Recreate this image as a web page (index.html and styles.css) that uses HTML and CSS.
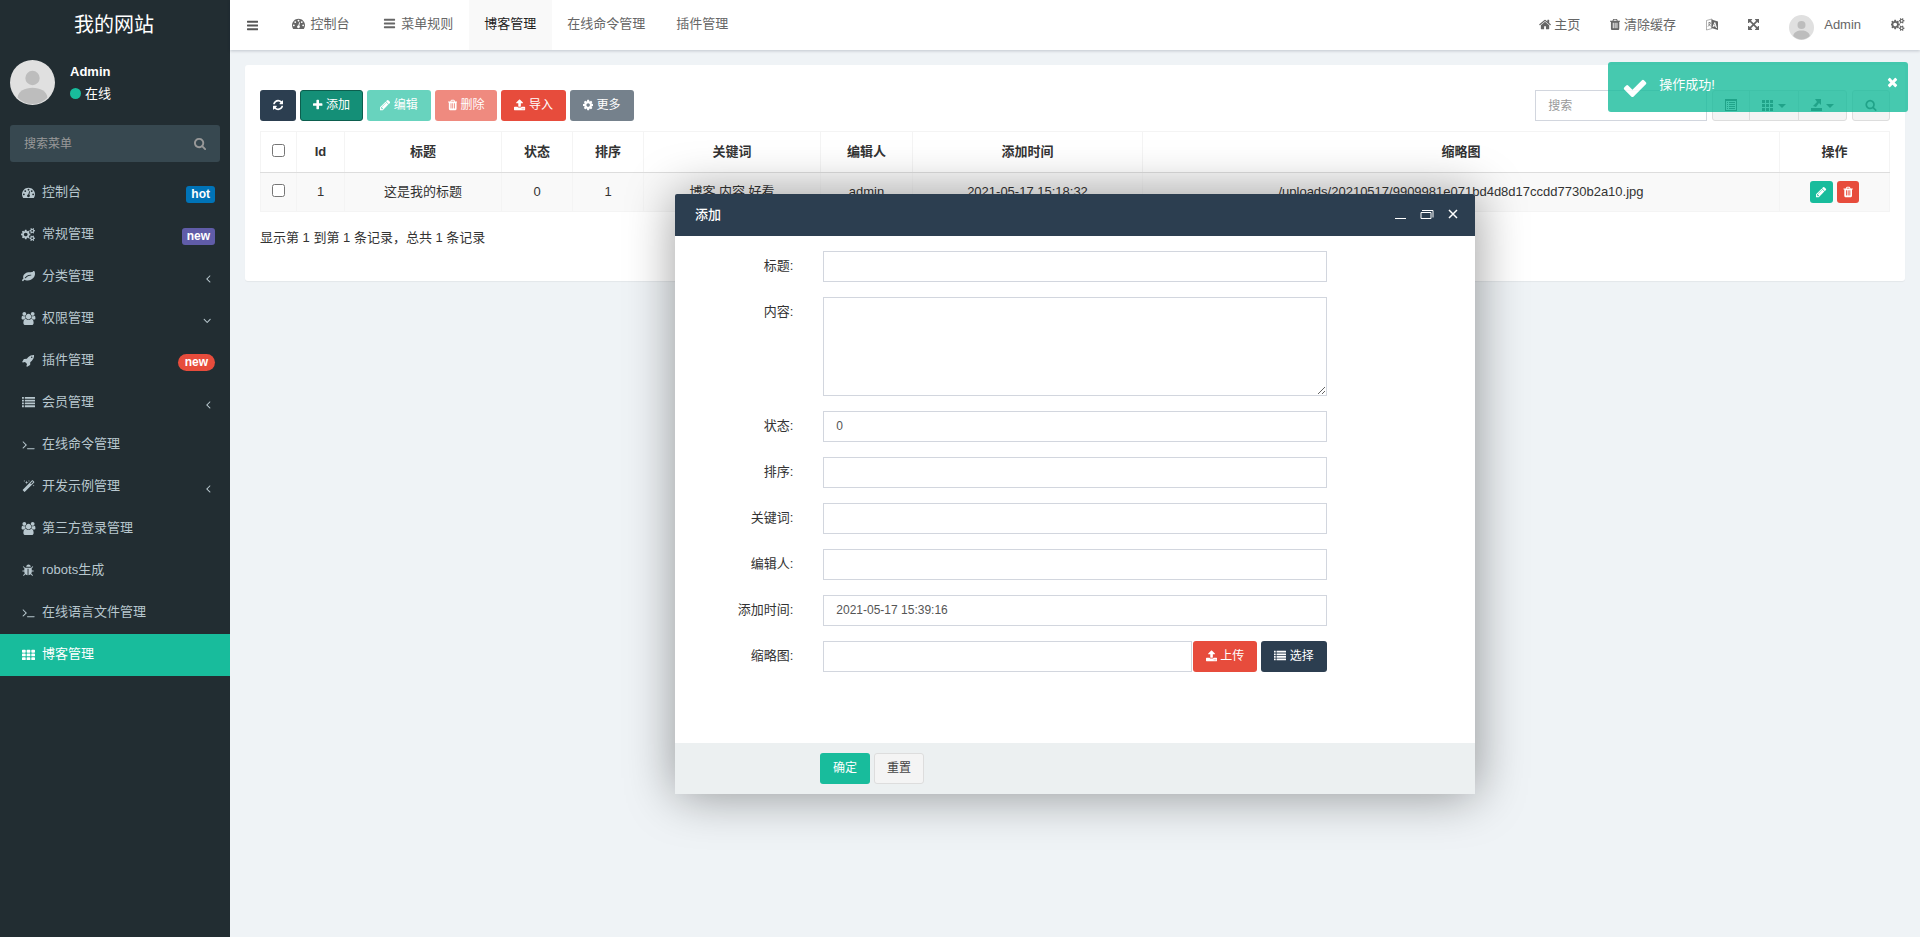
FILE: index.html
```html
<!DOCTYPE html>
<html lang="zh-CN">
<head>
    <meta charset="UTF-8">
    <meta name="viewport" content="width=device-width, initial-scale=1.0">
    <title>我的网站</title>
    <link rel="stylesheet" href="styles.css">
</head>
<body>

    <!-- Icon shapes -->
    <svg class="sprite" aria-hidden="true">
        <defs>
            <path id="bars" d="M1664 1344v128q0 26-19 45t-45 19h-1408q-26 0-45-19t-19-45v-128q0-26 19-45t45-19h1408q26 0 45 19t19 45zm0-512v128q0 26-19 45t-45 19h-1408q-26 0-45-19t-19-45v-128q0-26 19-45t45-19h1408q26 0 45 19t19 45zm0-512v128q0 26-19 45t-45 19h-1408q-26 0-45-19t-19-45v-128q0-26 19-45t45-19h1408q26 0 45 19t19 45z"/>
            <path id="search" d="M1216 832q0-185-131.500-316.500t-316.500-131.500-316.500 131.500-131.500 316.500 131.500 316.500 316.500 131.500 316.500-131.500 131.500-316.500zm512 832q0 52-38 90t-90 38q-54 0-90-38l-343-342q-179 124-399 124-143 0-273.500-55.500t-225-150-150-225-55.500-273.500 55.500-273.500 150-225 225-150 273.500-55.500 273.500 55.500 225 150 150 225 55.500 273.500q0 220-124 399l343 343q37 37 37 90z"/>
            <path id="plus" d="M1600 736v192q0 40-28 68t-68 28h-416v416q0 40-28 68t-68 28h-192q-40 0-68-28t-28-68v-416h-416q-40 0-68-28t-28-68v-192q0-40 28-68t68-28h416v-416q0-40 28-68t68-28h192q40 0 68 28t28 68v416h416q40 0 68 28t28 68z"/>
            <path id="pencil" d="M491 1536l91-91-235-235-91 91v107h128v128h107zm523-928q0-22-22-22-10 0-17 7l-542 542q-7 7-7 17 0 22 22 22 10 0 17-7l542-542q7-7 7-17zm-54-192l416 416-832 832h-416v-416zm683 96q0 53-37 90l-166 166-416-416 166-165q36-38 90-38 53 0 91 38l235 234q37 39 37 91z"/>
            <path id="trash" d="M704 1376v-704q0-14-9-23t-23-9h-64q-14 0-23 9t-9 23v704q0 14 9 23t23 9h64q14 0 23-9t9-23zm256 0v-704q0-14-9-23t-23-9h-64q-14 0-23 9t-9 23v704q0 14 9 23t23 9h64q14 0 23-9t9-23zm256 0v-704q0-14-9-23t-23-9h-64q-14 0-23 9t-9 23v704q0 14 9 23t23 9h64q14 0 23-9t9-23zm-544-992h448l-48-117q-7-9-17-11h-317q-10 2-17 11zm928 32v64q0 14-9 23t-23 9h-96v948q0 83-47 143.500t-113 60.500h-832q-66 0-113-58.500t-47-141.500v-952h-96q-14 0-23-9t-9-23v-64q0-14 9-23t23-9h309l70-167q15-37 54-63t79-26h320q40 0 79 26t54 63l70 167h309q14 0 23 9t9 23z"/>
            <path id="upload" d="M1344 1472q0-26-19-45t-45-19-45 19-19 45 19 45 45 19 45-19 19-45zm256 0q0-26-19-45t-45-19-45 19-19 45 19 45 45 19 45-19 19-45zm128-224v320q0 40-28 68t-68 28h-1472q-40 0-68-28t-28-68v-320q0-40 28-68t68-28h427q21 56 70.500 92t110.500 36h256q61 0 110.500-36t70.500-92h427q40 0 68 28t28 68zm-325-648q-17 40-59 40h-256v448q0 26-19 45t-45 19h-256q-26 0-45-19t-19-45v-448h-256q-42 0-59-40-17-39 14-69l448-448q18-19 45-19t45 19l448 448q31 30 14 69z"/>
            <path id="cog" d="M1152 896q0-106-75-181t-181-75-181 75-75 181 75 181 181 75 181-75 75-181zm512-109v222q0 12-8 23t-20 13l-185 28q-19 54-39 91 35 50 107 138 10 12 10 25t-9 23q-27 37-99 108t-94 71q-12 0-26-9l-138-108q-44 23-91 38-16 136-29 186-7 28-36 28h-222q-14 0-24.500-8.500t-11.500-21.500l-28-184q-49-16-90-37l-141 107q-10 9-25 9-14 0-25-11-126-114-165-168-7-10-7-23 0-12 8-23 15-21 51-66.500t54-70.500q-27-50-41-99l-183-27q-13-2-21-12.500t-8-23.500v-222q0-12 8-23t19-13l186-28q14-46 39-92-40-57-107-138-10-12-10-24 0-10 9-23 26-36 98.500-107.500t94.500-71.500q13 0 26 10l138 107q44-23 91-38 16-136 29-186 7-28 36-28h222q14 0 24.500 8.500t11.500 21.500l28 184q49 16 90 37l142-107q9-9 24-9 13 0 25 10 129 119 165 170 7 8 7 22 0 12-8 23-15 21-51 66.500t-54 70.500q26 50 41 98l183 28q13 2 21 12.500t8 23.500z"/>
            <path id="refresh" d="M1639 1056q0 5-1 7-64 268-268 434.500t-478 166.500q-146 0-282.500-55t-243.500-157l-129 129q-19 19-45 19t-45-19-19-45v-448q0-26 19-45t45-19h448q26 0 45 19t19 45-19 45l-137 137q71 66 161 102t187 36q134 0 250-65t186-179q11-17 53-117 8-23 30-23h192q13 0 22.500 9.500t9.500 22.500zm25-800v448q0 26-19 45t-45 19h-448q-26 0-45-19t-19-45 19-45l138-138q-148-137-349-137-134 0-250 65t-186 179q-11 17-53 117-8 23-30 23h-199q-13 0-22.500-9.500t-9.500-22.500v-7q65-268 270-434.500t480-166.500q146 0 284 55.500t245 156.500l130-129q19-19 45-19t45 19 19 45z"/>
            <path id="home" d="M1472 992v480q0 26-19 45t-45 19h-384v-384h-256v384h-384q-26 0-45-19t-19-45v-480q0-1 .5-3t.5-3l575-474 575 474q1 2 1 6zm223-69l-62 74q-8 9-21 11h-3q-13 0-21-7l-692-577-692 577q-12 8-24 7-13-2-21-11l-62-74q-8-10-7-23.500t11-21.500l719-599q32-26 76-26t76 26l244 204v-195q0-14 9-23t23-9h192q14 0 23 9t9 23v408l219 182q10 8 11 21.500t-7 23.500z"/>
            <path id="check" d="M1671 566q0 40-28 68l-724 724-136 136q-28 28-68 28t-68-28l-136-136-362-362q-28-28-28-68t28-68l136-136q28-28 68-28t68 28l294 295 656-657q28-28 68-28t68 28l136 136q28 28 28 68z"/>
            <path id="times" d="M1490 1322q0 40-28 68l-136 136q-28 28-68 28t-68-28l-294-294-294 294q-28 28-68 28t-68-28l-136-136q-28-28-28-68t28-68l294-294-294-294q-28-28-28-68t28-68l136-136q28-28 68-28t68 28l294 294 294-294q28-28 68-28t68 28l136 136q28 28 28 68t-28 68l-294 294 294 294q28 28 28 68z"/>
            <path id="angle-left" d="M1203 544q0 13-10 23l-393 393 393 393q10 10 10 23t-10 23l-50 50q-10 10-23 10t-23-10l-466-466q-10-10-10-23t10-23l466-466q10-10 23-10t23 10l50 50q10 10 10 23z"/>
            <path id="angle-down" d="M1395 736q0 13-10 23l-466 466q-10 10-23 10t-23-10l-466-466q-10-10-10-23t10-23l50-50q10-10 23-10t23 10l393 393 393-393q10-10 23-10t23 10l50 50q10 10 10 23z"/>
            <path id="terminal" d="M649 983l-466 466q-10 10-23 10t-23-10l-50-50q-10-10-10-23t10-23l393-393-393-393q-10-10-10-23t10-23l50-50q10-10 23-10t23 10l466 466q10 10 10 23t-10 23zm1079 457v64q0 14-9 23t-23 9h-960q-14 0-23-9t-9-23v-64q0-14 9-23t23-9h960q14 0 23 9t9 23z"/>
            <path id="users" d="M593 896q-162 5-265 128h-134q-82 0-138-40.500t-56-118.500q0-353 124-353 6 0 43.500 21t97.500 42.500 119 21.500q67 0 133-23-5 37-5 66 0 139 81 256zm1071 637q0 120-73 189.500t-194 69.500h-874q-121 0-194-69.500t-73-189.500q0-53 3.500-103.500t14-109 26.500-108.500 43-97.500 62-81 85.500-53.500 111.500-20q10 0 43 21.500t73 48 107 48 135 21.500 135-21.500 107-48 73-48 43-21.500q61 0 111.500 20t85.500 53.500 62 81 43 97.500 26.500 108.500 14 109 3.500 103.500zm-1024-1277q0 106-75 181t-181 75-181-75-75-181 75-181 181-75 181 75 75 181zm704 384q0 159-112.500 271.500t-271.500 112.500-271.500-112.500-112.500-271.500 112.500-271.500 271.500-112.500 271.500 112.500 112.500 271.500zm576 225q0 78-56 118.500t-138 40.500h-134q-103-123-265-128 81-117 81-256 0-29-5-66 66 23 133 23 59 0 119-21.500t97.500-42.500 43.500-21q124 0 124 353zm-128-609q0 106-75 181t-181 75-181-75-75-181 75-181 181-75 181 75 75 181z"/>
            <path id="dashboard" d="M384 1152q0-53-37.500-90.500t-90.500-37.500-90.500 37.500-37.500 90.500 37.500 90.500 90.500 37.500 90.500-37.500 37.500-90.500zm192-448q0-53-37.500-90.500t-90.500-37.500-90.500 37.500-37.500 90.500 37.500 90.500 90.500 37.500 90.500-37.500 37.500-90.500zm428 481l101-382q6-26-7.500-48.500t-38.500-29.500-48 6.500-30 39.500l-101 382q-60 5-107 43.500t-63 98.500q-20 77 20 146t117 89 146-20 89-117q16-60-6-117t-72-91zm660-33q0-53-37.500-90.500t-90.500-37.500-90.500 37.500-37.500 90.500 37.500 90.500 90.500 37.500 90.500-37.500 37.500-90.500zm-640-640q0-53-37.500-90.500t-90.500-37.500-90.500 37.500-37.500 90.500 37.500 90.500 90.500 37.500 90.500-37.500 37.500-90.500zm448 192q0-53-37.500-90.500t-90.500-37.500-90.500 37.500-37.500 90.500 37.500 90.500 90.500 37.500 90.500-37.500 37.500-90.500zm320 448q0 261-141 483-19 29-54 29h-1402q-35 0-54-29-141-221-141-483 0-182 71-348t191-286 286-191 348-71 348 71 286 191 191 286 71 348z"/>
            <path id="expand" d="M1411 541l-355 355 355 355 144-144q29-31 70-14 39 17 39 59v448q0 26-19 45t-45 19h-448q-42 0-59-40-17-39 14-69l144-144-355-355-355 355 144 144q31 30 14 69-17 40-59 40h-448q-26 0-45-19t-19-45v-448q0-42 40-59 39-17 69 14l144 144 355-355-355-355-144 144q-19 19-45 19-12 0-24-5-40-17-40-59v-448q0-26 19-45t45-19h448q42 0 59 40 17 39-14 69l-144 144 355 355 355-355-144-144q-31-30-14-69 17-40 59-40h448q26 0 45 19t19 45v448q0 42-39 59-13 5-25 5-26 0-45-19z"/>
            <path id="leaf" d="M1280 704q0-26-19-45t-45-19q-172 0-318 49.500t-259.500 134-235.500 219.500q-19 21-19 45 0 26 19 45t45 19q24 0 45-19 27-24 74-71t67-66q137-124 268.500-176t313.500-52q26 0 45-19t19-45zm512-198q0 95-20 193-46 224-184.500 383t-357.500 268q-214 108-438 108-148 0-286-47-15-5-88-42t-96-37q-16 0-39.500 32t-45 70-52.500 70-60 32q-43 0-63.500-17.500t-45.500-59.500q-2-4-6-11t-5.500-10-3-9.500-1.500-13.500q0-35 31-73.500t68-65.500 68-56 31-48q0-4-14-38t-16-44q-9-51-9-104 0-115 43.500-220t119-184.500 170.500-139 204-95.500q55-18 145-25.500t179.500-9 178.500-6 163.500-24 113.500-56.500l29.500-29.500 29.500-28 27-20 36.500-16 43.500-4.500q39 0 70.500 46t47.500 112 24 124 8 96z"/>
            <path id="rocket" d="M1440 448q0-40-28-68t-68-28-68 28-28 68 28 68 68 28 68-28 28-68zm224-288q0 249-75.500 430.500t-253.500 360.500q-81 80-195 176l-20 379q-2 16-16 26l-384 224q-7 4-16 4-12 0-23-9l-64-64q-13-14-8-32l85-276-281-281-276 85q-3 1-9 1-14 0-23-9l-64-64q-17-19-5-39l224-384q10-14 26-16l379-20q96-114 176-195 188-187 358-258t431-71q14 0 24 9.500t10 22.500z"/>
            <path id="magic" d="M1254 581l293-293-107-107-293 293zm447-293q0 27-18 45l-1286 1286q-18 18-45 18t-45-18l-198-198q-18-18-18-45t18-45l1286-1286q18-18 45-18t45 18l198 198q18 18 18 45zm-1351-190l98 30-98 30-30 98-30-98-98-30 98-30 30-98zm350 162l196 60-196 60-60 196-60-196-196-60 196-60 60-196zm930 478l98 30-98 30-30 98-30-98-98-30 98-30 30-98zm-640-640l98 30-98 30-30 98-30-98-98-30 98-30 30-98z"/>
            <path id="bug" d="M1632 960q0 26-19 45t-45 19h-224q0 171-67 290l208 209q19 19 19 45t-19 45q-18 19-45 19t-45-19l-198-197q-5 5-15 13t-42 28.500-65 36.500-82 29-97 13v-896h-128v896q-51 0-101.500-13.500t-87-33-66-39-43.500-32.500l-15-14-183 207q-20 21-48 21-24 0-43-16-19-18-20.500-44.500t15.500-46.500l202-227q-58-114-58-274h-224q-26 0-45-19t-19-45 19-45 45-19h224v-294l-173-173q-19-19-19-45t19-45 45-19 45 19l173 173h844l173-173q19-19 45-19t45 19 19 45-19 45l-173 173v294h224q26 0 45 19t19 45zm-416-576h-640q0-133 93.500-226.500t226.500-93.500 226.500 93.500 93.500 226.500z"/>
            <g id="cogs">
                <path d="M832 896q0-106-75-181t-181-75-181 75-75 181 75 181 181 75 181-75 75-181zm384-91v185q0 10-7 19.500t-16 10.500l-155 24q-11 35-32 76 34 48 90 115 7 11 7 20 0 12-7 19-23 30-82.500 89.500t-78.500 59.500q-11 0-21-7l-115-90q-37 19-77 31-11 108-23 155-7 24-30 24h-186q-11 0-20-7.500t-10-17.500l-23-153q-34-10-75-31l-118 89q-7 7-20 7-11 0-21-8-144-133-144-160 0-9 7-19 10-14 41-53t47-61q-23-44-35-82l-152-24q-10-1-17-9.500t-7-19.500v-185q0-10 7-19.500t16-10.500l155-24q11-35 32-76-34-48-90-115-7-11-7-20 0-12 7-20 22-30 82-89t79-59q11 0 21 7l115 90q34-18 77-32 11-108 23-154 7-24 30-24h186q11 0 20 7.500t10 17.500l23 153q34 10 75 31l118-89q8-7 20-7 11 0 21 8 144 133 144 160 0 8-7 19-12 16-42 54t-45 60q23 48 34 82l152 23q10 2 17 10.500t7 19.500z"/>
                <path id="cog-small" d="M1600 1408q0-52-38-90t-90-38-90 38-38 90q0 53 37.500 90.500t90.500 37.500 90.500-37.500 37.500-90.500zm256-70v140q0 16-149 31-12 27-30 52 51 113 51 138 0 4-4 7-122 71-124 71-8 0-46-47t-52-68q-20 2-30 2t-30-2q-14 21-52 68t-46 47q-2 0-124-71-4-3-4-7 0-25 51-138-18-25-30-52-149-15-149-31v-140q0-16 149-31 13-29 30-52-51-113-51-138 0-4 4-7 4-2 35-20t59-34 30-16q8 0 46 46.500t52 67.500q20-2 30-2t30 2q51-71 92-112l6-2q4 0 124 70 4 3 4 7 0 25-51 138 17 23 30 52 149 15 149 31z"/>
                <use href="#cog-small" y="-1024"/>
            </g>
            <path id="list" d="M32 128h192q32 0 32 32v192q0 32-32 32h-192q-32 0-32-32v-192q0-32 32-32zm0 384h192q32 0 32 32v192q0 32-32 32h-192q-32 0-32-32v-192q0-32 32-32zm0 384h192q32 0 32 32v192q0 32-32 32h-192q-32 0-32-32v-192q0-32 32-32zm0 384h192q32 0 32 32v192q0 32-32 32h-192q-32 0-32-32v-192q0-32 32-32zm384-1152h1344q32 0 32 32v192q0 32-32 32h-1344q-32 0-32-32v-192q0-32 32-32zm0 384h1344q32 0 32 32v192q0 32-32 32h-1344q-32 0-32-32v-192q0-32 32-32zm0 384h1344q32 0 32 32v192q0 32-32 32h-1344q-32 0-32-32v-192q0-32 32-32zm0 384h1344q32 0 32 32v192q0 32-32 32h-1344q-32 0-32-32v-192q0-32 32-32z"/>
            <path id="th" d="M96 256h320q96 0 96 96v192q0 96-96 96h-320q-96 0-96-96v-192q0-96 96-96zm640 0h320q96 0 96 96v192q0 96-96 96h-320q-96 0-96-96v-192q0-96 96-96zm640 0h320q96 0 96 96v192q0 96-96 96h-320q-96 0-96-96v-192q0-96 96-96zM96 768h320q96 0 96 96v192q0 96-96 96h-320q-96 0-96-96v-192q0-96 96-96zm640 0h320q96 0 96 96v192q0 96-96 96h-320q-96 0-96-96v-192q0-96 96-96zm640 0h320q96 0 96 96v192q0 96-96 96h-320q-96 0-96-96v-192q0-96 96-96zM96 1280h320q96 0 96 96v192q0 96-96 96h-320q-96 0-96-96v-192q0-96 96-96zm640 0h320q96 0 96 96v192q0 96-96 96h-320q-96 0-96-96v-192q0-96 96-96zm640 0h320q96 0 96 96v192q0 96-96 96h-320q-96 0-96-96v-192q0-96 96-96z"/>
            <g id="avatar">
                <circle cx="50" cy="50" r="50" fill="#e0e0e0"/>
                <circle cx="50" cy="40" r="16" fill="#bdbdbd"/>
                <path d="M17 84c0-30 66-30 66 0a46 46 0 0 1-66 0z" fill="#bdbdbd"/>
            </g>
        </defs>
    </svg>

    <!-- Sidebar -->
    <aside class="sidebar">
        <a href="#" class="logo">我的网站</a>

        <div class="user-panel">
            <svg class="avatar" viewBox="0 0 100 100"><use href="#avatar"/></svg>
            <div class="user-info">
                <strong>Admin</strong>
                <a href="#" class="status"><span class="dot"></span>在线</a>
            </div>
        </div>

        <form class="menu-search">
            <input type="text" placeholder="搜索菜单" aria-label="搜索菜单">
            <button type="button" aria-label="搜索"><svg class="icon" viewBox="64 0 1664 1792"><use href="#search"/></svg></button>
        </form>

        <nav class="menu">
            <a href="#"><svg class="icon fw" viewBox="0 0 1792 1792"><use href="#dashboard"/></svg>控制台<span class="label blue">hot</span></a>
            <a href="#"><svg class="icon fw" viewBox="0 0 1920 1792"><use href="#cogs"/></svg>常规管理<span class="label purple">new</span></a>
            <a href="#"><svg class="icon fw" viewBox="0 0 1792 1792"><use href="#leaf"/></svg>分类管理<svg class="icon arrow" viewBox="448 0 896 1792"><use href="#angle-left"/></svg></a>
            <a href="#"><svg class="icon fw" viewBox="0 0 1920 1792"><use href="#users"/></svg>权限管理<svg class="icon arrow" viewBox="320 0 1152 1792"><use href="#angle-down"/></svg></a>
            <a href="#"><svg class="icon fw" viewBox="0 0 1792 1792"><use href="#rocket"/></svg>插件管理<span class="label red">new</span></a>
            <a href="#"><svg class="icon fw" viewBox="0 0 1792 1792"><use href="#list"/></svg>会员管理<svg class="icon arrow" viewBox="448 0 896 1792"><use href="#angle-left"/></svg></a>
            <a href="#"><svg class="icon fw" viewBox="0 0 1792 1792"><use href="#terminal"/></svg>在线命令管理</a>
            <a href="#"><svg class="icon fw" viewBox="0 0 1792 1792"><use href="#magic"/></svg>开发示例管理<svg class="icon arrow" viewBox="448 0 896 1792"><use href="#angle-left"/></svg></a>
            <a href="#"><svg class="icon fw" viewBox="0 0 1920 1792"><use href="#users"/></svg>第三方登录管理</a>
            <a href="#"><svg class="icon fw" viewBox="0 0 1792 1792"><use href="#bug"/></svg>robots生成</a>
            <a href="#"><svg class="icon fw" viewBox="0 0 1792 1792"><use href="#terminal"/></svg>在线语言文件管理</a>
            <a href="#" class="active"><svg class="icon fw" viewBox="0 0 1792 1792"><use href="#th"/></svg>博客管理</a>
        </nav>
    </aside>

    <div class="main">
        <!-- Top bar -->
        <header class="topbar">
            <button type="button" class="toggle" aria-label="菜单"><svg class="icon" viewBox="128 0 1536 1792"><use href="#bars"/></svg></button>
            <nav class="tabs">
                <a href="#"><svg class="icon fw" viewBox="0 0 1792 1792"><use href="#dashboard"/></svg> 控制台</a>
                <a href="#"><svg class="icon fw" viewBox="0 0 1792 1792"><use href="#bars"/></svg> 菜单规则</a>
                <a href="#" class="active">博客管理</a>
                <a href="#">在线命令管理</a>
                <a href="#">插件管理</a>
            </nav>
            <nav class="tools">
                <a href="#"><svg class="icon" viewBox="64 0 1664 1792"><use href="#home"/></svg> 主页</a>
                <a href="#"><svg class="icon" viewBox="192 0 1408 1792"><use href="#trash"/></svg> 清除缓存</a>
                <a href="#" aria-label="语言">
                    <svg class="icon" viewBox="0 0 12 13">
                        <path d="M0.500 2.500 6 1v9.500L0.500 12z" fill="none" stroke="currentColor" stroke-opacity=".5"/>
                        <path d="M2 5h3M3.500 4v1M2 8.500 4.500 5.500M2.500 6 5 8.500" fill="none" stroke="currentColor" stroke-width=".7"/>
                        <path d="M5.500 1.500 12 3.500V12L5.500 10z"/>
                        <path d="M7 9 8.800 4.500 10.500 10M7.500 7.500l2.500.7" fill="none" stroke="#fff"/>
                    </svg>
                </a>
                <a href="#" aria-label="全屏"><svg class="icon" viewBox="128 0 1536 1792"><use href="#expand"/></svg></a>
                <a href="#" class="account"><svg class="avatar" viewBox="0 0 100 100"><use href="#avatar"/></svg>Admin</a>
                <a href="#" aria-label="设置"><svg class="icon" viewBox="0 0 1920 1792"><use href="#cogs"/></svg></a>
            </nav>
        </header>

        <div class="content">
            <section class="panel">
                <div class="toolbar">
                    <div class="actions">
                        <button type="button" class="btn navy" aria-label="刷新"><svg class="icon" viewBox="128 0 1536 1792"><use href="#refresh"/></svg></button>
                        <button type="button" class="btn green pressed"><svg class="icon" viewBox="192 0 1408 1792"><use href="#plus"/></svg> 添加</button>
                        <button type="button" class="btn green" disabled><svg class="icon" viewBox="128 0 1536 1792"><use href="#pencil"/></svg> 编辑</button>
                        <button type="button" class="btn red" disabled><svg class="icon" viewBox="192 0 1408 1792"><use href="#trash"/></svg> 删除</button>
                        <button type="button" class="btn red"><svg class="icon" viewBox="64 0 1664 1792"><use href="#upload"/></svg> 导入</button>
                        <button type="button" class="btn navy" disabled><svg class="icon" viewBox="128 0 1536 1792"><use href="#cog"/></svg> 更多</button>
                    </div>
                    <div class="filters">
                        <input type="text" class="control" placeholder="搜索" aria-label="搜索">
                        <div class="btn-group">
                            <button type="button" class="btn light" aria-label="切换">
                                <svg class="icon" viewBox="0 0 12 12"><path d="M0 0h12v12H0zM1 2v9h10V2zM2 3h1v1H2zM4 3h6v1H4zM2 5h1v1H2zM4 5h6v1H4zM2 7h1v1H2zM4 7h6v1H4zM2 9h1v1H2zM4 9h6v1H4z" fill-rule="evenodd"/></svg>
                            </button>
                            <button type="button" class="btn light" aria-label="列">
                                <svg class="icon" viewBox="0 0 12 12"><path d="M0 1h3v3H0zM4 1h3v3H4zM8 1h3v3H8zM0 5h3v3H0zM4 5h3v3H4zM8 5h3v3H8zM0 9h3v3H0zM4 9h3v3H4zM8 9h3v3H8z"/></svg>
                                <span class="caret"></span>
                            </button>
                            <button type="button" class="btn light" aria-label="导出">
                                <svg class="icon" viewBox="0 0 12 12"><path d="M0 9h11v3H0zM4 0h6v6L8 4 5 8 2 7l4-4z"/></svg>
                                <span class="caret"></span>
                            </button>
                        </div>
                        <button type="button" class="btn light" aria-label="查询"><svg class="icon" viewBox="0 0 1792 1792"><use href="#search"/></svg></button>
                    </div>
                </div>

                <table class="list">
                    <colgroup>
                        <col class="col-check"><col class="col-id"><col class="col-title"><col class="col-num"><col class="col-num">
                        <col class="col-keys"><col class="col-editor"><col class="col-time"><col><col class="col-ops">
                    </colgroup>
                    <thead>
                        <tr>
                            <th><input type="checkbox" aria-label="全选"></th>
                            <th>Id</th>
                            <th>标题</th>
                            <th>状态</th>
                            <th>排序</th>
                            <th>关键词</th>
                            <th>编辑人</th>
                            <th>添加时间</th>
                            <th>缩略图</th>
                            <th>操作</th>
                        </tr>
                    </thead>
                    <tbody>
                        <tr>
                            <td><input type="checkbox" aria-label="选择"></td>
                            <td>1</td>
                            <td>这是我的标题</td>
                            <td>0</td>
                            <td>1</td>
                            <td>博客 内容 好看</td>
                            <td>admin</td>
                            <td>2021-05-17 15:18:32</td>
                            <td>/uploads/20210517/9909981e071bd4d8d17ccdd7730b2a10.jpg</td>
                            <td>
                                <div class="ops">
                                    <button type="button" class="btn green small" aria-label="编辑"><svg class="icon" viewBox="128 0 1536 1792"><use href="#pencil"/></svg></button>
                                    <button type="button" class="btn red small" aria-label="删除"><svg class="icon" viewBox="128 0 1536 1792"><use href="#trash"/></svg></button>
                                </div>
                            </td>
                        </tr>
                    </tbody>
                </table>

                <p class="summary">显示第 1 到第 1 条记录，总共 1 条记录</p>
            </section>

            <!-- Add dialog -->
            <div class="overlay">
                <div class="dialog" role="dialog" aria-labelledby="dialogTitle">
                    <div class="dialog-title">
                        <span id="dialogTitle">添加</span>
                        <div class="window-buttons">
                            <button type="button" aria-label="最小化"><svg width="14" height="14" viewBox="0 0 14 14"><path d="M1 10.500h11"/></svg></button>
                            <button type="button" aria-label="最大化"><svg width="14" height="14" viewBox="0 0 14 14"><path d="M1 4.500h10v6H1zM2 2.500h11v7"/></svg></button>
                            <button type="button" aria-label="关闭"><svg width="14" height="14" viewBox="0 0 14 14"><path d="M3 2l8 8M11 2l-8 8" stroke-width="1.500"/></svg></button>
                        </div>
                    </div>

                    <form class="dialog-form" id="addForm">
                        <div class="form-group">
                            <label for="title">标题:</label>
                            <div class="field"><input type="text" class="control" id="title"></div>
                        </div>
                        <div class="form-group">
                            <label for="body">内容:</label>
                            <div class="field"><textarea class="control" id="body" rows="5"></textarea></div>
                        </div>
                        <div class="form-group">
                            <label for="state">状态:</label>
                            <div class="field"><input type="text" class="control" id="state" value="0"></div>
                        </div>
                        <div class="form-group">
                            <label for="sort">排序:</label>
                            <div class="field"><input type="text" class="control" id="sort"></div>
                        </div>
                        <div class="form-group">
                            <label for="keywords">关键词:</label>
                            <div class="field"><input type="text" class="control" id="keywords"></div>
                        </div>
                        <div class="form-group">
                            <label for="editor">编辑人:</label>
                            <div class="field"><input type="text" class="control" id="editor"></div>
                        </div>
                        <div class="form-group">
                            <label for="addtime">添加时间:</label>
                            <div class="field"><input type="text" class="control" id="addtime" value="2021-05-17 15:39:16"></div>
                        </div>
                        <div class="form-group">
                            <label for="thumb">缩略图:</label>
                            <div class="field">
                                <input type="text" class="control" id="thumb">
                                <div class="file-buttons">
                                    <button type="button" class="btn red"><svg class="icon" viewBox="64 0 1664 1792"><use href="#upload"/></svg> 上传</button>
                                    <button type="button" class="btn navy"><svg class="icon" viewBox="0 0 1792 1792"><use href="#list"/></svg> 选择</button>
                                </div>
                            </div>
                        </div>
                    </form>

                    <div class="dialog-footer">
                        <button type="submit" class="btn green" form="addForm">确定</button>
                        <button type="reset" class="btn light" form="addForm">重置</button>
                    </div>
                </div>
            </div>
        </div>
    </div>

    <!-- Toast message -->
    <div class="toast" role="status">
        <svg class="icon toast-check" viewBox="64 0 1664 1792"><use href="#check"/></svg>
        <span>操作成功!</span>
        <button type="button" aria-label="关闭"><svg class="icon" viewBox="192 0 1408 1792"><use href="#times"/></svg></button>
    </div>

</body>
</html>
```

FILE: styles.css
```css
* {
    box-sizing: border-box;
}

body {
    display: flex;
    min-height: 100vh;
    margin: 0;
    background-color: #eff3f6;
    color: #333;
    font-family: "Liberation Sans", "Noto Sans CJK SC", sans-serif;
    font-size: 13px;
    line-height: 20px;
}

a {
    color: inherit;
    text-decoration: none;
}

button,
input,
textarea {
    font-family: inherit;
}

button {
    cursor: pointer;
}

.sprite {
    position: absolute;
    width: 0;
    height: 0;
}

.icon {
    height: 1em;
    vertical-align: -2px;
    fill: currentColor;
}

.icon.fw {
    width: 17px;
}

/* Sidebar */
.sidebar {
    flex: 0 0 230px;
    min-width: 0;
    background-color: #222d32;
    color: #fff;
}

.logo {
    display: block;
    height: 50px;
    padding-right: 2px;
    font-size: 20px;
    line-height: 50px;
    text-align: center;
}

.user-panel {
    display: flex;
    gap: 15px;
    padding: 10px;
}

.user-panel .avatar {
    width: 45px;
    height: 45px;
}

.user-info {
    display: flex;
    flex-direction: column;
    justify-content: center;
    gap: 2px;
}

.status {
    display: flex;
    align-items: center;
    gap: 4px;
}

.dot {
    width: 11px;
    height: 11px;
    border-radius: 50%;
    background-color: #18bc9c;
}

.menu-search {
    display: flex;
    height: 37px;
    margin: 10px;
    border-radius: 3px;
    background-color: #374850;
}

.menu-search input {
    flex: 1;
    min-width: 0;
    padding: 0 14px;
    border: none;
    background: none;
    color: #fff;
    font-size: 12px;
}

.menu-search input::placeholder {
    color: #999;
}

.menu-search button {
    width: 40px;
    border: none;
    background: none;
    color: #999;
    font-size: 13px;
}

.menu a {
    display: flex;
    align-items: center;
    height: 42px;
    padding: 0 15px 2px 20px;
    color: #b8c7ce;
}

.menu .fw {
    margin-right: 5px;
}

.menu .active {
    background-color: #18bc9c;
    color: #fff;
}

.label {
    margin: 5px 0 0 auto;
    padding: 0 5px;
    border-radius: 3px;
    color: #fff;
    font-size: 12px;
    font-weight: bold;
    line-height: 17px;
}

.label.blue {
    background-color: #0073b7;
}

.label.purple {
    background-color: #605ca8;
}

.label.red {
    padding: 0 7px;
    border-radius: 9px;
    background-color: #e74c3c;
}

.menu .arrow {
    margin: 4px 4px 0 auto;
}

/* Top bar */
.main {
    flex: 1;
    display: flex;
    flex-direction: column;
    min-width: 0;
}

.topbar {
    display: flex;
    height: 50px;
    background-color: #fff;
    box-shadow: 0 1px 3px rgba(0, 21, 41, 0.2);
    color: #666;
    line-height: 48px;
}

.toggle {
    width: 45px;
    padding: 0;
    border: none;
    background: none;
    color: #555;
    font-size: 13px;
}

.tabs {
    display: flex;
}

.tabs a {
    padding: 0 15px;
    border-right: 1px solid transparent;
}

.tabs .active {
    background-color: #f9f9f9;
    color: #222;
}

.tools {
    display: flex;
    margin-left: auto;
}

.tools a {
    padding: 1px 15px 0;
}

.tools .account {
    display: flex;
    gap: 10px;
}

.account .avatar {
    width: 25px;
    height: 25px;
    margin-top: 14px;
}

/* List panel */
.content {
    position: relative;
    flex: 1;
    padding: 15px;
}

.panel {
    padding: 25px 15px;
    border-radius: 3px;
    background-color: #fff;
    box-shadow: 0 1px 1px rgba(0, 0, 0, 0.05);
}

.toolbar {
    display: flex;
    justify-content: space-between;
    margin-bottom: 10px;
}

.actions,
.filters,
.ops {
    display: flex;
    gap: 4px;
}

.filters {
    gap: 5px;
}

.ops {
    justify-content: center;
}

.btn {
    padding: 5px 12px;
    border: 1px solid transparent;
    border-radius: 3px;
    color: #fff;
    font-size: 12px;
    line-height: 19px;
    white-space: nowrap;
}

.btn:disabled {
    opacity: 0.65;
}

.btn.navy {
    background-color: #2c3e50;
}

.btn.green {
    background-color: #18bc9c;
}

.btn.green.pressed {
    border-color: #0c5e4e;
    background-color: #148f77;
}

.btn.red {
    background-color: #e74c3c;
}

.btn.light {
    border-color: #ddd;
    background-color: #f4f4f4;
    color: #444;
}

.btn.small {
    padding: 0 5px;
    line-height: 20px;
}

.control {
    width: 100%;
    height: 31px;
    padding: 5px 12px;
    border: 1px solid #d2d6de;
    border-radius: 0;
    background-color: #fff;
    color: #555;
    font-size: 12px;
}

.control::placeholder {
    color: #999;
}

.filters .control {
    width: 172px;
}

.btn-group {
    display: flex;
}

.btn-group .btn + .btn {
    margin-left: -1px;
    border-top-left-radius: 0;
    border-bottom-left-radius: 0;
}

.btn-group .btn:not(:last-child) {
    border-top-right-radius: 0;
    border-bottom-right-radius: 0;
}

.caret {
    display: inline-block;
    border: 4px solid transparent;
    border-top-color: currentColor;
    border-bottom: none;
    vertical-align: middle;
}

.list {
    width: 100%;
    border-collapse: collapse;
    table-layout: fixed;
    text-align: center;
}

.list th,
.list td {
    height: 39px;
    padding: 0;
    border: 1px solid #f4f4f4;
}

.list th {
    height: 41px;
    border-bottom-color: #ddd;
}

.list tbody tr {
    background-color: #f9f9f9;
}

.list input {
    display: block;
    width: 13px;
    height: 13px;
    margin: 0 auto 4px;
}

.col-check { width: 36px; }
.col-id { width: 48px; }
.col-title { width: 157px; }
.col-num { width: 71px; }
.col-keys { width: 177px; }
.col-editor { width: 92px; }
.col-time { width: 230px; }
.col-ops { width: 110px; }

.summary {
    margin: 16px 0 8px;
}

/* Dialog */
.overlay {
    position: absolute;
    inset: 0;
    display: flex;
    justify-content: center;
    align-items: center;
}

.dialog {
    width: 800px;
    max-width: 100%;
    border-radius: 2px;
    background-color: #fff;
    box-shadow: 1px 1px 50px rgba(0, 0, 0, 0.4);
}

.dialog-title {
    display: flex;
    justify-content: space-between;
    align-items: center;
    height: 42px;
    padding: 0 15px 0 20px;
    border-radius: 2px 2px 0 0;
    background-color: #2c3e50;
    color: #fff;
    font-weight: 500;
}

.window-buttons {
    display: flex;
    gap: 12px;
}

.window-buttons button {
    display: flex;
    padding: 0;
    border: none;
    background: none;
}

.window-buttons path {
    fill: none;
    stroke: #fff;
}

.dialog-form {
    padding: 15px 0 56px;
}

.form-group {
    display: grid;
    grid-template-columns: 2fr 8fr 2fr;
    margin-bottom: 15px;
}

.form-group label {
    padding: 5px 15px 0 0;
    text-align: right;
}

.field {
    display: flex;
    gap: 1px;
    padding: 0 15px;
}

.field textarea {
    height: 99px;
    resize: vertical;
}

.file-buttons {
    display: flex;
    gap: 4px;
}

.dialog-footer {
    display: flex;
    gap: 4px;
    padding: 10px 145px;
    background-color: #ecf0f1;
}

/* Toast */
.toast {
    position: fixed;
    top: 62px;
    right: 12px;
    display: flex;
    gap: 12px;
    width: 300px;
    height: 50px;
    padding: 13px 10px 13px 15px;
    border-radius: 3px;
    background-color: #18bc9c;
    color: #fff;
    opacity: 0.8;
}

.toast-check {
    font-size: 26px;
}

.toast button {
    align-self: flex-start;
    margin-left: auto;
    padding: 0;
    border: none;
    background: none;
    color: #fff;
    font-size: 14px;
    line-height: 12px;
}
```
